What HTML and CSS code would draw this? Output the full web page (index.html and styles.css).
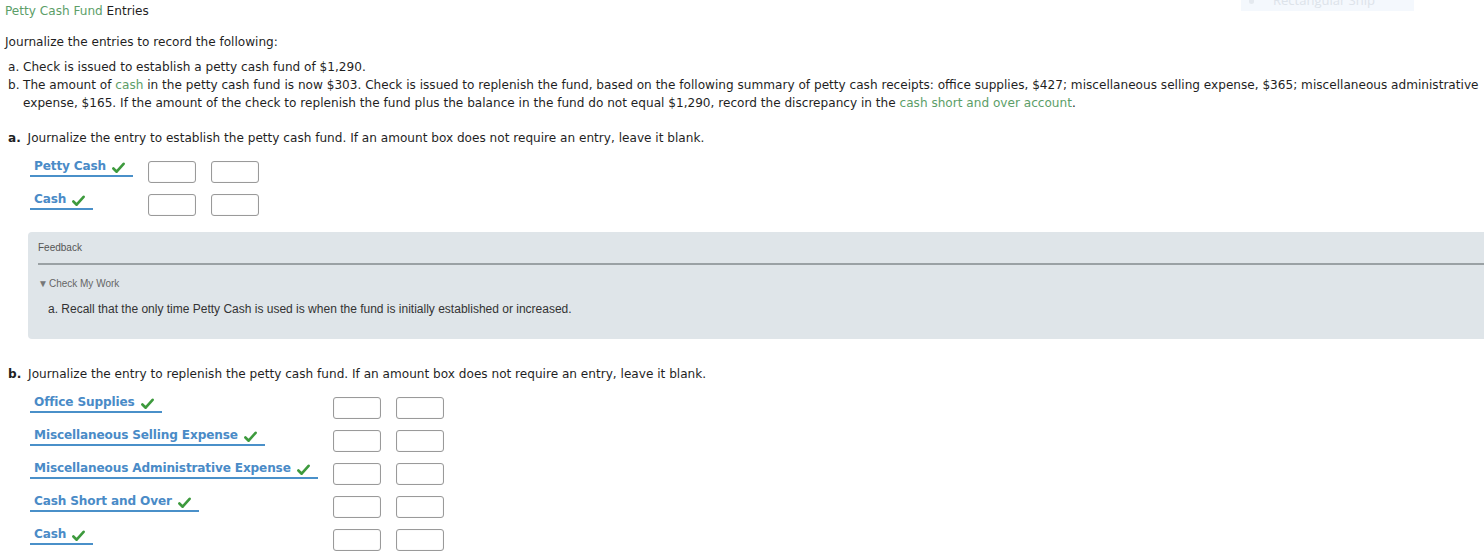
FILE: index.html
```html
<!DOCTYPE html>
<html>
<head>
<meta charset="utf-8">
<link rel="stylesheet" href="styles.css">
</head>
<body>
<div class="chip"><span class="chip-dot"></span><span class="chip-text">Rectangular Snip</span></div>
<div class="page">
  <div class="title"><span class="green">Petty Cash Fund</span> Entries</div>
  <p class="intro">Journalize the entries to record the following:</p>
  <ol class="items">
    <li><span class="mk">a.</span><span>Check is issued to establish a petty cash fund of $1,290.</span></li>
    <li><span class="mk">b.</span><span>The amount of <span class="green">cash</span> in the petty cash fund is now $303. Check is issued to replenish the fund, based on the following summary of petty cash receipts: office supplies, $427; miscellaneous selling expense, $365; miscellaneous administrative expense, $165. If the amount of the check to replenish the fund plus the balance in the fund do not equal $1,290, record the discrepancy in the <span class="green">cash short and over account</span>.</span></li>
  </ol>

  <p class="part part-a"><b>a.</b> Journalize the entry to establish the petty cash fund. If an amount box does not require an entry, leave it blank.</p>
  <div class="journal">
    <div class="acct">Petty Cash <svg class="chk" viewBox="0 0 14 12"><path d="M1.5 6.5 L5 10 L12.5 1.5"/></svg></div>
    <div class="amt"></div><div class="amt"></div>
    <div class="acct">Cash <svg class="chk" viewBox="0 0 14 12"><path d="M1.5 6.5 L5 10 L12.5 1.5"/></svg></div>
    <div class="amt"></div><div class="amt"></div>
  </div>

  <div class="feedback">
    <div class="fb-head">Feedback</div>
    <div class="fb-toggle"><span class="tri">▼</span>Check My Work</div>
    <div class="fb-text">a. Recall that the only time Petty Cash is used is when the fund is initially established or increased.</div>
  </div>

  <p class="part part-b"><b>b.</b> Journalize the entry to replenish the petty cash fund. If an amount box does not require an entry, leave it blank.</p>
  <div class="journal">
    <div class="acct">Office Supplies <svg class="chk" viewBox="0 0 14 12"><path d="M1.5 6.5 L5 10 L12.5 1.5"/></svg></div>
    <div class="amt"></div><div class="amt"></div>
    <div class="acct">Miscellaneous Selling Expense <svg class="chk" viewBox="0 0 14 12"><path d="M1.5 6.5 L5 10 L12.5 1.5"/></svg></div>
    <div class="amt"></div><div class="amt"></div>
    <div class="acct">Miscellaneous Administrative Expense <svg class="chk" viewBox="0 0 14 12"><path d="M1.5 6.5 L5 10 L12.5 1.5"/></svg></div>
    <div class="amt"></div><div class="amt"></div>
    <div class="acct">Cash Short and Over <svg class="chk" viewBox="0 0 14 12"><path d="M1.5 6.5 L5 10 L12.5 1.5"/></svg></div>
    <div class="amt"></div><div class="amt"></div>
    <div class="acct">Cash <svg class="chk" viewBox="0 0 14 12"><path d="M1.5 6.5 L5 10 L12.5 1.5"/></svg></div>
    <div class="amt"></div><div class="amt"></div>
  </div>
</div>
</body>
</html>
```

FILE: styles.css
```css
html, body {
  margin: 0;
  padding: 0;
  overflow: hidden;
  background: #fff;
}
body {
  font-family: "DejaVu Sans", Verdana, sans-serif;
  font-size: 12.1px;
  line-height: 18px;
  color: #1f1f1f;
  position: relative;
}
.chip {
  position: absolute;
  left: 1241px;
  top: 0;
  width: 173px;
  height: 11px;
  background: #f4f8fd;
  overflow: hidden;
}
.chip-dot {
  position: absolute;
  left: 8px;
  top: 0;
  width: 5px;
  height: 4px;
  border-radius: 0 0 3px 3px;
  background: #e4e9ef;
}
.chip-text {
  position: absolute;
  left: 32px;
  top: -9px;
  font-family: "Open Sans", sans-serif;
  font-size: 13px;
  color: #dde3ea;
  white-space: nowrap;
}
.page {
  padding: 2px 0 0 5px;
}
.green { color: #5c9e68; }
.title { margin: 0; }
.intro { margin: 13px 0 0 0; }
.items {
  list-style: none;
  margin: 7px 0 0 0;
  padding: 0;
  width: 1484px;
}
.items li {
  display: flex;
}
.items .mk {
  flex: 0 0 15px;
  padding-left: 3px;
}
.part {
  margin: 17px 0 0 3px;
}
.part-b { margin-top: 26px; }
.part b {
  font-weight: bold;
  margin-right: 3px;
}
.journal {
  display: grid;
  grid-template-columns: max-content 48px 48px;
  column-gap: 15px;
  row-gap: 7px;
  margin: 10px 0 0 25px;
  align-items: start;
}
.acct {
  justify-self: start;
  font-weight: bold;
  letter-spacing: -0.15px;
  color: #4a8bc7;
  padding: 0 8px 0 4px;
  border-bottom: 2px solid #4a90c9;
  height: 18px;
  white-space: nowrap;
  display: flex;
  align-items: center;
  gap: 6px;
}
.chk {
  width: 13px;
  height: 12px;
  margin-top: 3px;
}
.chk path {
  fill: none;
  stroke: #3d9a3d;
  stroke-width: 2.8;
  stroke-linecap: round;
  stroke-linejoin: round;
}
.amt {
  margin-top: 4px;
  height: 20px;
  border: 1px solid #9a9a9a;
  border-radius: 3px;
  box-shadow: inset 0 0 1px #ccc;
  background: #fff;
}
.feedback {
  margin: 16px 0 0 23px;
  background: #dfe5e9;
  border-radius: 4px 0 0 4px;
  height: 107px;
  padding: 0 0 0 10px;
  font-family: "Liberation Sans", Arial, sans-serif;
}
.fb-head {
  padding-top: 10px;
  font-size: 10px;
  line-height: 12px;
  color: #555;
  padding-bottom: 9px;
  border-bottom: 2px solid #9aa1a4;
}
.fb-toggle {
  margin-top: 13px;
  font-size: 10px;
  line-height: 12px;
  color: #666;
}
.tri {
  font-size: 10px;
  color: #777;
  margin-right: 1px;
}
.fb-text {
  margin: 12px 0 0 10px;
  font-size: 12px;
  line-height: 14px;
  color: #333;
}
```
